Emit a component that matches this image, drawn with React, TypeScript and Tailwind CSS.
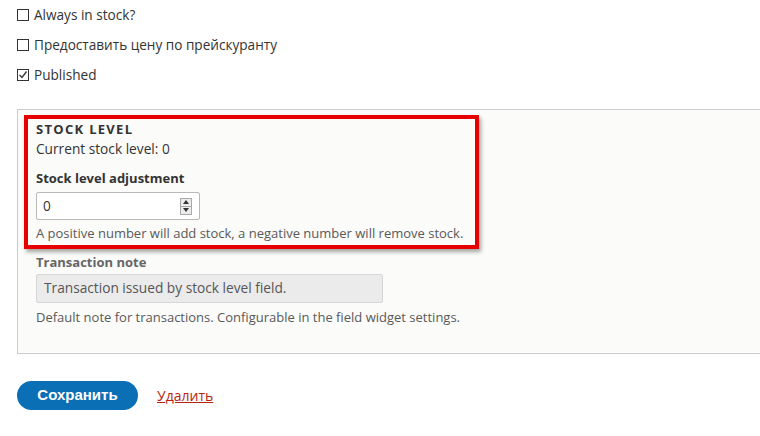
import React from "react";

const font = { fontFamily: '"Open Sans", "DejaVu Sans", sans-serif' };

function Check({ checked, label }: { checked?: boolean; label: string }) {
  return (
    <div className="flex h-[30px] items-center">
      <span className="flex h-[12px] w-[12px] items-center justify-center border border-[#333] bg-white">
        {checked && (
          <svg width="10" height="10" viewBox="0 0 10 10">
            <path d="M1.5 5 L4 7.5 L8.5 1.5" fill="none" stroke="#333" strokeWidth="1.3" />
          </svg>
        )}
      </span>
      <span className="ml-[5px] text-[13.6px] text-[#333]">{label}</span>
    </div>
  );
}

export default function App() {
  return (
    <div className="h-[436px] w-[760px] overflow-hidden bg-white pl-[17px]" style={font}>
      <Check label="Always in stock?" />
      <Check label="Предоставить цену по прейскуранту" />
      <Check checked label="Published" />

      <div className="mt-[19px] w-[780px] border border-[#ccc] bg-[#fbfbfa] pb-[28px] pl-[6px] pt-[5px]">
        <div className="w-[455px] border-4 border-[#e60000] pb-[4px] pl-[8px] pt-[1px] shadow-[2px_3px_4px_rgba(0,0,0,0.35)]">
          <div className="text-[13px] font-bold uppercase leading-[18px] tracking-[1.3px] text-[#333]">Stock level</div>
          <div className="mt-[2px] text-[13.7px] leading-[18px] text-[#333]">Current stock level: 0</div>
          <div className="mt-[11px] text-[13px] font-bold leading-[18px] text-[#333]">Stock level adjustment</div>
          <div className="mt-[5px] flex h-[28px] w-[164px] items-center rounded-[2px] border border-[#b8b8b8] bg-white pl-[6px] pr-[7px]">
            <span className="flex-1 text-[13.6px] text-[#333]">0</span>
            <span className="flex h-[17px] w-[12px] flex-col border border-[#a9a9a9] bg-[#ececec]">
              <span className="flex flex-1 items-center justify-center border-b border-[#a9a9a9]">
                <svg width="6" height="4" viewBox="0 0 6 4"><path d="M0 4 L3 0 L6 4Z" fill="#333" /></svg>
              </span>
              <span className="flex flex-1 items-center justify-center">
                <svg width="6" height="4" viewBox="0 0 6 4"><path d="M0 0 L3 4 L6 0Z" fill="#333" /></svg>
              </span>
            </span>
          </div>
          <div className="mt-[5px] text-[13px] leading-[16px] text-[#595959]">
            A positive number will add stock, a negative number will remove stock.
          </div>
        </div>

        <div className="ml-[12px]">
          <div className="mt-[4px] text-[13px] font-bold leading-[18px] text-[#666]">Transaction note</div>
          <div className="mt-[3px] flex h-[29px] w-[347px] items-center rounded-[2px] border border-[#d6d6d6] bg-[#ebebeb] pl-[7px] text-[13.7px] text-[#555]">
            Transaction issued by stock level field.
          </div>
          <div className="mt-[6px] text-[13px] leading-[16px] text-[#595959]">
            Default note for transactions. Configurable in the field widget settings.
          </div>
        </div>
      </div>

      <div className="mt-[27px] flex items-center">
        <button
          className="flex h-[29px] w-[121px] items-center justify-center rounded-full bg-[#0a6fb5] text-[15px] font-bold text-white"
          style={{ fontFamily: '"Liberation Sans", Arial, sans-serif' }}
        >
          Сохранить
        </button>
        <a className="ml-[19px] text-[14px] text-[#b8250f] underline">Удалить</a>
      </div>
    </div>
  );
}
